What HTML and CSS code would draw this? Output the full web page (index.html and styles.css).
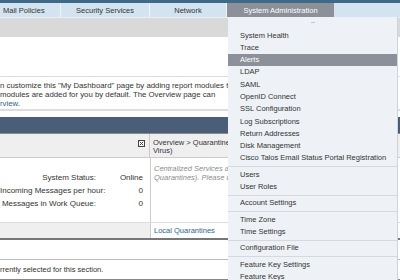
FILE: index.html
```html
<!DOCTYPE html>
<html lang="en">
<head>
    <meta charset="UTF-8">
    <title>My Dashboard</title>
    <link rel="stylesheet" href="styles.css">
</head>
<body>
    <!-- Top navigation -->
    <div class="topline"></div>
    <div class="nav">
        <div class="tab tab-mail">Mail Policies</div>
        <div class="tab tab-security">Security Services</div>
        <div class="tab tab-network">Network</div>
        <div class="tab tab-admin active">System Administration</div>
        <div class="tab tab-rest"></div>
    </div>
    <div class="subbar"></div>

    <!-- Page content -->
    <div class="page">
        <div class="intro">
            n customize this "My Dashboard" page by adding report modules to it.<br>
            modules are added for you by default. The Overview page can<br>
            <a href="#">rview</a>.
        </div>

        <div class="section-bar"></div>

        <div class="panel">
            <div class="panel-row panel-head">
                <div class="cell cell-left">
                    <svg class="close-icon" width="7" height="7" viewBox="0 0 7 7">
                        <rect x="0.5" y="0.5" width="6" height="6" fill="#fff" stroke="#444"/>
                        <path d="M1.8 1.8 L5.2 5.2 M5.2 1.8 L1.8 5.2" stroke="#444" stroke-width="1"/>
                    </svg>
                </div>
                <div class="cell cell-right">Overview &gt; Quarantines (Spam, Policy,<br>Virus)</div>
            </div>
            <div class="panel-row panel-body">
                <div class="cell cell-left">
                    <div class="stats">
                        <span class="label">System Status:</span><span class="value">Online</span>
                        <span class="label">Incoming Messages per hour:</span><span class="value">0</span>
                        <span class="label">Messages in Work Queue:</span><span class="value">0</span>
                    </div>
                </div>
                <div class="cell cell-right note">Centralized Services are enabled (Spam, Policy, Virus and Outbreak<br>Quarantines). Please use the Security Management appliance.</div>
            </div>
            <div class="panel-row panel-foot">
                <div class="cell cell-left"></div>
                <div class="cell cell-right"><a href="#">Local Quarantines</a></div>
            </div>
        </div>

        <div class="empty-box">rrently selected for this section.</div>
    </div>

    <!-- System Administration menu -->
    <div class="menu">
        <div class="menu-caret"></div>
        <div class="menu-item">System Health</div>
        <div class="menu-item">Trace</div>
        <div class="menu-item selected">Alerts</div>
        <div class="menu-item">LDAP</div>
        <div class="menu-item">SAML</div>
        <div class="menu-item">OpenID Connect</div>
        <div class="menu-item">SSL Configuration</div>
        <div class="menu-item">Log Subscriptions</div>
        <div class="menu-item">Return Addresses</div>
        <div class="menu-item">Disk Management</div>
        <div class="menu-item">Cisco Talos Email Status Portal Registration</div>
        <div class="menu-sep"></div>
        <div class="menu-item">Users</div>
        <div class="menu-item">User Roles</div>
        <div class="menu-sep"></div>
        <div class="menu-item">Account Settings</div>
        <div class="menu-sep"></div>
        <div class="menu-item">Time Zone</div>
        <div class="menu-item">Time Settings</div>
        <div class="menu-sep"></div>
        <div class="menu-item">Configuration File</div>
        <div class="menu-sep"></div>
        <div class="menu-item">Feature Key Settings</div>
        <div class="menu-item">Feature Keys</div>
    </div>
</body>
</html>
```

FILE: styles.css
```css
/* Basic layout */
body {
    font-family: "Liberation Sans", Arial, sans-serif;
    font-size: 8px;
    color: #333;
    margin: 0;
    padding: 0;
    width: 400px;
    height: 280px;
    overflow: hidden;
    background-color: #fff;
}
a {
    color: #2b6690;
    text-decoration: none;
}
/* Navigation */
.topline {
    height: 3px;
    background-color: #3f6889;
}
.nav {
    display: flex;
    height: 14px;
    background-color: #d4e3f0;
    border-bottom: 1px solid #e8eff6;
    font-size: 7.5px;
}
.tab {
    display: flex;
    align-items: center;
    justify-content: center;
    border-right: 1px solid #eef4fa;
    white-space: nowrap;
}
.tab-mail {
    width: 61px;
    justify-content: flex-start;
    padding-left: 3px;
    box-sizing: border-box;
}
.tab-security {
    width: 88px;
}
.tab-network {
    width: 76px;
}
.tab-admin {
    width: 107px;
}
.tab-rest {
    flex: 1;
    border-right: none;
}
.tab.active {
    background-color: #8b9099;
    color: #fff;
    border-right: none;
}
.subbar {
    height: 19px;
    background-color: #d9d9d9;
}
/* Content */
.intro {
    margin-top: 39px;
    border-top: 1px solid #ddd;
    border-bottom: 2px solid #ddd;
    padding: 4px 0 1px 0;
    line-height: 9px;
    font-size: 7.8px;
    white-space: nowrap;
}
.section-bar {
    margin-top: 6px;
    height: 16px;
    background-color: #4a5e78;
}
.panel {
    border-top: 1px solid #8a8a8a;
    border-bottom: 2px solid #777;
}
.panel-row {
    display: flex;
}
.cell-left {
    width: 150px;
    border-right: 1px solid #ccc;
    flex-shrink: 0;
}
.cell-right {
    flex: 1;
    padding-left: 3px;
    white-space: nowrap;
}
.panel-head {
    height: 23px;
    background-color: #efefef;
    border-bottom: 1px solid #ccc;
    font-size: 7.5px;
}
.panel-head .cell-left {
    display: flex;
    justify-content: flex-end;
    align-items: flex-start;
    padding-top: 6px;
    box-sizing: border-box;
}
.panel-head .cell-right {
    padding-top: 5px;
    line-height: 8px;
}
.close-icon {
    display: block;
    margin-right: 4px;
}
.panel-body {
    height: 64px;
}
.stats {
    display: grid;
    grid-template-columns: 96px 47px;
    grid-auto-rows: 13px;
    align-items: center;
    padding-top: 13px;
    white-space: nowrap;
}
.label {
    text-align: right;
}
.value {
    text-align: right;
}
.note {
    padding-top: 7px;
    font-style: italic;
    color: #8c8c8c;
    font-size: 7.5px;
    line-height: 8.5px;
}
.panel-foot {
    height: 15px;
    border-top: 1px solid #ddd;
    font-size: 7.5px;
}
.panel-foot .cell-left {
    background-color: #efefef;
}
.panel-foot .cell-right {
    display: flex;
    align-items: center;
}
.empty-box {
    margin-top: 19px;
    border-top: 1px solid #bbb;
    border-bottom: 2px solid #888;
    height: 19px;
    line-height: 19px;
    font-size: 7.5px;
    white-space: nowrap;
}
/* Dropdown menu */
.menu {
    position: absolute;
    top: 17px;
    left: 228px;
    width: 169px;
    height: 263px;
    background-color: #eef2f6;
    border-right: 1px solid #cdd4db;
    font-size: 7.5px;
    overflow: hidden;
}
.menu-caret {
    height: 12.5px;
    position: relative;
}
.menu-caret::after {
    content: "";
    position: absolute;
    left: 83px;
    top: 5px;
    width: 4px;
    height: 1px;
    background-color: #c4c9cf;
}
.menu-item {
    height: 12.3px;
    line-height: 12.3px;
    padding-left: 12px;
    white-space: nowrap;
}
.menu-item.selected {
    background-color: #8b9099;
    color: #fff;
}
.menu-sep {
    margin: 1.5px 0;
    border-top: 1px solid #d3d9df;
}
```
